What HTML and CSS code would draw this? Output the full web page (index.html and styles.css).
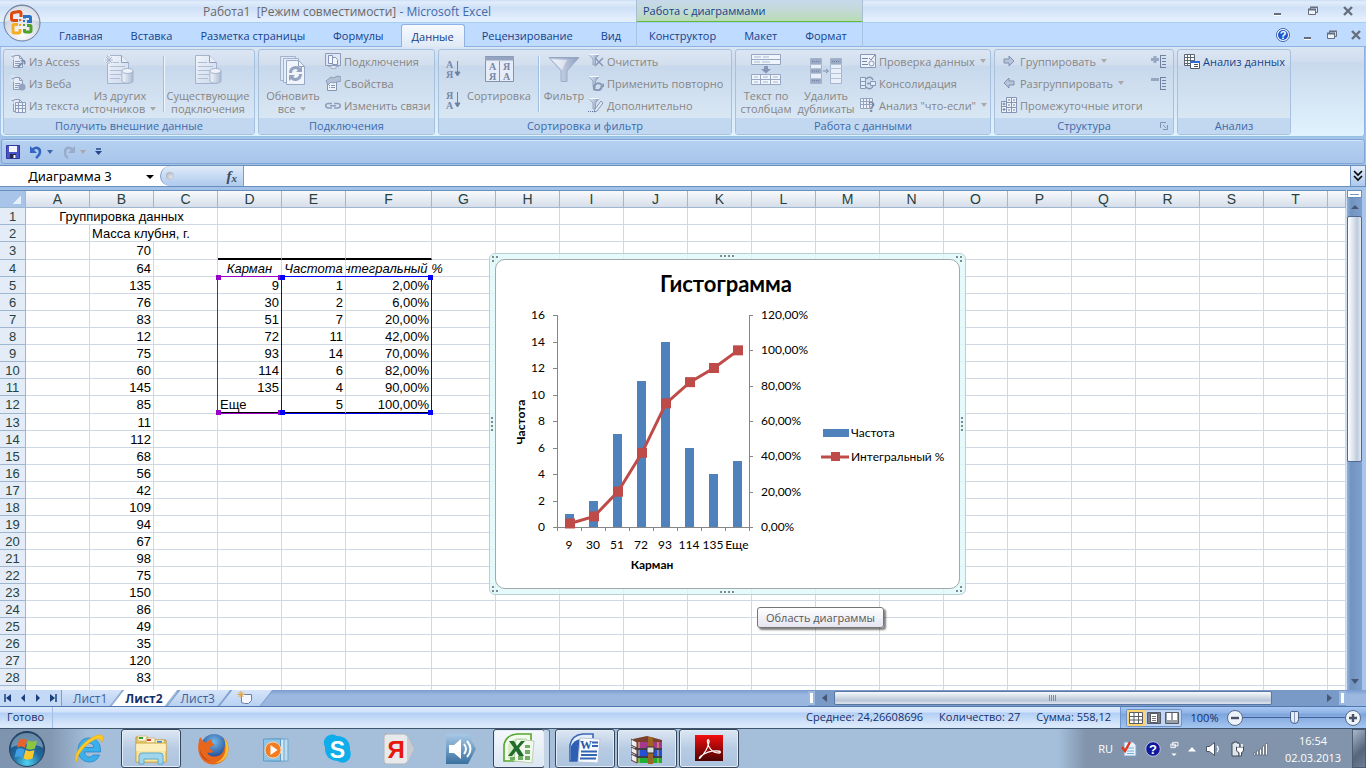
FILE: index.html
```html
<!DOCTYPE html>
<html lang="ru">
<head>
  <meta charset="UTF-8">
  <meta name="viewport" content="width=device-width, initial-scale=1">
  <title>Работа1 - Microsoft Excel</title>
  <link rel="stylesheet" href="styles.css">
</head>
<body>
  <!-- Shared icon shapes -->
  <svg class="sprite" aria-hidden="true">
    <defs>
      <linearGradient id="gPage" x1="0" y1="0" x2="1" y2="1"><stop offset="0" stop-color="#f1f5fc"/><stop offset="1" stop-color="#ccd8ea"/></linearGradient>
      <linearGradient id="gCyl" x1="0" x2="1"><stop offset="0" stop-color="#f3f7fc"/><stop offset="1" stop-color="#a9b8d2"/></linearGradient>
      <linearGradient id="gFunnel" x1="0" x2="1"><stop offset="0" stop-color="#e9f0f9"/><stop offset=".5" stop-color="#b9c6dc"/><stop offset="1" stop-color="#8fa0be"/></linearGradient>
    </defs>
    <symbol id="page" viewBox="0 0 32 32">
      <path d="M3.500 1.500h14l7 7v21h-21z" fill="url(#gPage)" stroke="#a3b3cf"/>
      <path d="M17.500 1.500v7h7" fill="#e9effa" stroke="#8d9dbb"/>
      <path d="M6 8.500h9M6 12.500h15M6 16.500h15M6 20.500h15M6 24.500h10" stroke="#afbdd6"/>
      <path d="M18 17v10c0 3 11 3 11 0V17z" fill="url(#gCyl)" stroke="#a3b1ca"/>
      <ellipse cx="23.500" cy="17" rx="5.500" ry="2.500" fill="#eef3fa" stroke="#a3b1ca"/>
    </symbol>
    <symbol id="smallpage" viewBox="0 0 16 16">
      <path d="M3.500 2.500h6l3 3v9h-9z" fill="#e6edf8" stroke="#8c9cba"/>
      <path d="M9.500 2.500v3h3M5 8.500h5M5 10.500h5M5 12.500h3" fill="none" stroke="#8c9cba"/>
      <path d="M0 3.500h6M3 0v7M1 1l4 5M5 1L1 6" stroke="#e9f0fb"/><path d="M3 2v3M1 3.500h4" stroke="#a7b5ce"/>
    </symbol>
    <symbol id="smallfunnel" viewBox="0 0 16 16">
      <path d="M1 1.500h10L7.500 6v5L5 12V6z" fill="url(#gFunnel)" stroke="#8797b5" stroke-width=".8"/>
      <path d="M1 1.500h10" stroke="#f5f8fd"/>
    </symbol>
    <symbol id="restore" viewBox="0 0 12 10">
      <path d="M3.500 3V1.500h7v5H8.500M3 1h8" fill="none" stroke="#666e7c"/>
      <path d="M1.500 3.500h7v5h-7z" fill="#eef4fc" stroke="#666e7c"/><path d="M1 3.500h8" stroke="#666e7c" stroke-width="2"/>
    </symbol>
    <symbol id="cross" viewBox="0 0 12 10"><path d="M2 1l8 8M10 1L2 9" stroke="#666e7c" stroke-width="2.400"/></symbol>
    <symbol id="minimize" viewBox="0 0 12 10"><path d="M2 8h7" stroke="#666e7c" stroke-width="2"/><path d="M2 9.500h7" stroke="#fff"/></symbol>
    <symbol id="outline" viewBox="0 0 16 16">
      <path d="M9.500 2v12M9 2.500h6M11 5.500h4M11 8.500h4M11 11.500h4M9 14.500h6" stroke="#6f80a0" fill="none"/>
    </symbol>
  </svg>

  <header class="top">
    <button class="office" aria-label="Office">
      <svg viewBox="0 0 40 40">
        <defs>
          <radialGradient id="gOrb" cx=".5" cy=".8" r=".8"><stop offset="0" stop-color="#fff"/><stop offset=".6" stop-color="#d5dae6"/><stop offset="1" stop-color="#8e99b0"/></radialGradient>
        </defs>
        <circle cx="20" cy="20" r="18" fill="url(#gOrb)" stroke="#6b7c99"/>
        <path d="M3 19a17 16 0 0 1 34 0c-9-4-25-4-34 0z" fill="#f4f6fb" opacity=".7"/>
        <g fill="none" stroke-width="3">
          <path d="M16 17.500h-4.500q-2 0-2-2v-4q0-1.500 2-2l5.500-1q2 0 2 2V14" stroke="#dc4a10"/>
          <path d="M22.500 15.500v-2h5q1 0 1 1v4h-3.500" stroke="#2b73c2"/>
          <path d="M16 21.500h-4q-1 0-1 1v6q0 1.500 1.500 1.500h4q1.500 0 1.500-1.500V26" stroke="#f5ae22"/>
          <path d="M25 22.500h3q1 0 1 1v4q0 1.500-1.500 1.500h-4q-1 0-1-1V26" stroke="#4fa12c"/>
        </g>
        <g fill="#e0641c"><path d="M17 16h2v2h-2z"/><path d="M21 17h2v2h-2z" fill="#2b73c2"/><path d="M17 21h2v2h-2z" fill="#f2a71b"/><path d="M21 21h2v2h-2z" fill="#4fa12c"/></g>
      </svg>
    </button>
    <div class="titlebar">
      <div class="title"><span class="doc">Работа1&nbsp; [Режим совместимости]</span> - Microsoft Excel</div>
      <div class="context-title">Работа с диаграммами</div>
      <div class="winbtns">
        <button aria-label="Свернуть"><svg><use href="#minimize"/></svg></button>
        <button aria-label="Восстановить"><svg><use href="#restore"/></svg></button>
        <button aria-label="Закрыть"><svg><use href="#cross"/></svg></button>
      </div>
    </div>
    <nav class="tabs">
      <div class="main-tabs">
        <button>Главная</button>
        <button>Вставка</button>
        <button>Разметка страницы</button>
        <button>Формулы</button>
        <button class="active">Данные</button>
        <button>Рецензирование</button>
        <button>Вид</button>
      </div>
      <div class="context-tabs">
        <button>Конструктор</button>
        <button>Макет</button>
        <button>Формат</button>
      </div>
      <div class="docbtns">
        <button aria-label="Справка"><svg viewBox="0 0 14 14"><circle cx="7" cy="7" r="6.500" fill="#fff" stroke="#3c62a8"/><circle cx="7" cy="7" r="5" fill="#1f55cf"/><text x="7" y="11" text-anchor="middle" class="q">?</text></svg></button>
        <button aria-label="Свернуть окно"><svg><use href="#minimize"/></svg></button>
        <button aria-label="Восстановить окно"><svg><use href="#restore"/></svg></button>
        <button aria-label="Закрыть окно"><svg><use href="#cross"/></svg></button>
      </div>
    </nav>
  </header>

  <section class="ribbon">
    <div class="group g-external">
      <div class="tools">
        <div class="list">
          <button><svg><use href="#smallpage"/><path d="M8 14l4-4M11 8a2 2 0 1 1 3 3" stroke="#7b8cab" stroke-width="2" fill="none"/></svg>Из Access</button>
          <button><svg><use href="#smallpage"/><circle cx="12" cy="12" r="3.500" fill="#94a4c0"/></svg>Из Веба</button>
          <button><svg><use href="#smallpage"/><path d="M5.500 5.500h10v10h-10zM5 8.500h11M5 11.500h11M8.500 6v10M12.500 6v10" fill="#eef3fb" stroke="#8c9cba"/></svg>Из текста</button>
        </div>
        <button class="big w-other"><svg viewBox="0 0 32 32"><use href="#page"/><path d="M0 6h10M5 1v10M2 3l6 6M8 3L2 9" stroke="#edf3fb" stroke-width="2"/><path d="M1 6h8M5 2v8M2 3l6 6M8 3L2 9" stroke="#a4b2cb"/></svg><span>Из других<br>источников <i class="arr"></i></span></button>
        <span class="sep"></span>
        <button class="big w-exist"><svg viewBox="0 0 32 32"><use href="#page"/></svg><span>Существующие<br>подключения</span></button>
      </div>
      <h2>Получить внешние данные</h2>
    </div>

    <div class="group g-conn">
      <div class="tools">
        <button class="big w-refresh"><svg viewBox="0 0 32 32">
          <path d="M3.500 2.500h15v24h-15z" fill="#dfe8f5" stroke="#a3b3cf"/><path d="M6.500 4.500h15v24h-15z" fill="#e6edf8" stroke="#a3b3cf"/>
          <path d="M9.500 6.500h12l6 6v18h-18z" fill="#f0f4fb" stroke="#98a8c5"/><path d="M21.500 6.500v6h6" fill="none" stroke="#8d9dbb"/>
          <path d="M13.500 19c0-6 7-7 9-3M23.500 20c0 6-7 7-9 3" fill="none" stroke="#94a4c0" stroke-width="3"/><path d="M19 18h6v-6zM18 21h-6v6z" fill="#94a4c0"/></svg><span>Обновить<br>все <i class="arr"></i></span></button>
        <div class="list">
          <button><svg><path d="M.5.5h15v12H.500z" fill="#dfe7f4" stroke="#8c9cba"/><path d="M3.500 2.500h4v8h-4zM7.500 4.500h3l2 2v5h-5z" fill="#f2f6fc" stroke="#8494b2"/><path d="M3 13.500h3v2h5v-2h3" stroke="#a4b1c9" fill="#e5ecf7"/></svg>Подключения</button>
          <button><svg><path d="M2.500 5.500h9v10h-9z" fill="#eef3fb" stroke="#8494b2"/><path d="M4 10.500h1M6 10.500h4M4 12.500h1M6 12.500h4" stroke="#8494b2"/><path d="M1 6l5-4 2 1 5-2 3 1v4l-4 1-4 1-2-1-3 3z" fill="#b3c0d6" stroke="#8c9bb8"/></svg>Свойства</button>
          <button><svg><path d="M7 6.500H3.500a2.500 2 0 0 0 0 4.500H7M9 6.500h3.500a2.500 2 0 0 1 0 4.500H9M5 8.800h6" fill="none" stroke="#8e9dba" stroke-width="1.600"/></svg>Изменить связи</button>
        </div>
      </div>
      <h2>Подключения</h2>
    </div>

    <div class="group g-sort">
      <div class="tools">
        <div class="sorts">
          <button aria-label="По возрастанию"><svg viewBox="0 0 16 20"><text x="1" y="9" class="az">А</text><text x="1" y="19" class="az">Я</text><path d="M12.500 2v13M10 13l2.500 4 2.500-4z" stroke="#6f80a0" fill="#6f80a0"/></svg></button>
          <button aria-label="По убыванию"><svg viewBox="0 0 16 20"><text x="1" y="9" class="az">Я</text><text x="1" y="19" class="az">А</text><path d="M12.500 2v13M10 13l2.500 4 2.500-4z" stroke="#6f80a0" fill="#6f80a0"/></svg></button>
        </div>
        <button class="big w-sort"><svg viewBox="0 0 32 32"><path d="M2.500 2.500h28v25h-28z" fill="#e6edf8" stroke="#8292b0"/><path d="M2 4.500h29" stroke="#94a3bf" stroke-width="4"/><path d="M16.500 7v20" stroke="#8292b0"/>
          <text x="6" y="16" class="az">А</text><text x="6" y="26" class="az">Я</text><text x="20" y="16" class="az">Я</text><text x="20" y="26" class="az">А</text></svg><span>Сортировка</span></button>
        <span class="sep"></span>
        <button class="big w-filter"><svg viewBox="0 0 32 32"><path d="M1 3.500h30L19 17v10.500h-6V17z" fill="url(#gFunnel)" stroke="#a0aec8"/><path d="M2 4h28" stroke="#8f9fbc"/><path d="M5 6h14l-5 10z" fill="#fff" opacity=".5"/></svg><span>Фильтр</span></button>
        <div class="list">
          <button><svg><use href="#smallfunnel"/><path d="M7 5l8 8M15 5l-8 8" stroke="#8696b4" stroke-width="1.500"/></svg>Очистить</button>
          <button><svg><use href="#smallfunnel"/><path d="M6 12c1-5 6-4 8-2M14 11c-1 5-5 5-8 3" stroke="#8696b4" stroke-width="2" fill="none"/><path d="M12 12h4V8zM8 12H5v4z" fill="#8696b4"/></svg>Применить повторно</button>
          <button><svg><use href="#smallfunnel"/><path d="M13 4l2 2-6 8-3 1 1-3z" fill="#e3ebf7" stroke="#8696b4"/><path d="M0 14.500h7" stroke="#65779a" stroke-dasharray="1 1"/></svg>Дополнительно</button>
        </div>
      </div>
      <h2>Сортировка и фильтр</h2>
    </div>

    <div class="group g-data">
      <div class="tools">
        <button class="big w-text"><svg viewBox="0 0 32 32"><path d="M1.500.5h29v10h-29zM1 5.500h30M1.500 20.500h29v10h-29zM1 25.500h30M10.500 20v10M20.500 20v10" fill="#f0f5fc" stroke="#96a6c3"/><path d="M4 3h7M13 3h6M4 8h6M12 8h8M4 23h4M13 23h5M23 23h5M4 28h4M13 28h5M23 28h5" stroke="#a9b7cf"/><path d="M14 12h4v3h3l-5 4.500L11 15h3z" fill="#8595b3"/></svg><span>Текст по<br>столбцам</span></button>
        <button class="big w-dup"><svg viewBox="0 0 32 32"><path d="M.5 4.500h11v25H.500zM20.500 4.500h11v25h-11z" fill="#eaf0f9" stroke="#a5b3cc"/><path d="M1 5h10v5H1zM1 15h10v4H1zM1 24h10v5H1zM21 5h10v5H21z" fill="#9babc5"/><path d="M2 7.500h8M2 17h8M2 26.500h8M22 7.500h8" stroke="#6f80a0" stroke-dasharray="1 1"/><path d="M0 10.500h12M0 14.500h12M0 19.500h12M0 24.500h12M20 10.500h12M20 14.500h12M20 19.500h12M20 24.500h12" stroke="#b5c1d6"/><path d="M13 17h5M16 15l2.500 2-2.500 2" stroke="#7d8dac" fill="none"/></svg><span>Удалить<br>дубликаты</span></button>
        <div class="list">
          <button><svg><path d="M.5 1.500h15v13H.500z" fill="#eef3fb" stroke="#8797b5"/><path d="M2 5.500h6M2 8.500h5M2 11.500h6M9 5l2 2 4-5" stroke="#7787a6" fill="none"/><circle cx="11.500" cy="10.500" r="2.500" fill="none" stroke="#8797b5"/></svg>Проверка данных <i class="arr"></i></button>
          <button><svg><path d="M.5 2.500h5v11h-5zM0 6.500h6M0 10.500h6M10.500 6.500h5v4h-5z" fill="#e3ebf7" stroke="#8797b5"/><path d="M6 4c3-3 6-2 7 1M6 12c3 3 6 2 7-1M7 8.500h3" stroke="#8797b5" stroke-width="1.500" fill="none"/></svg>Консолидация</button>
          <button><svg><path d="M.5 1.500h12v10H.500zM0 4.500h13M0 7.500h13M3.500 1v11M6.500 1v11M9.500 1v11" fill="#eef3fb" stroke="#94a4c0"/><text x="8" y="15" class="what">?</text></svg>Анализ "что-если" <i class="arr"></i></button>
        </div>
      </div>
      <h2>Работа с данными</h2>
    </div>

    <div class="group g-struct">
      <div class="tools">
        <div class="list">
          <button><svg><path d="M3 6h5V3l5 5-5 5v-3H3z" fill="#b7c4da" stroke="#8090ae"/></svg>Группировать <i class="arr"></i></button>
          <button><svg><path d="M13 6H8V3L3 8l5 5v-3h5z" fill="#b7c4da" stroke="#8090ae"/></svg>Разгруппировать <i class="arr"></i></button>
          <button><svg><path d="M.5 4.500h5v11h-5zM.5 9.500h5M5.500.5h10v15h-10zM5 5.500h11M5 10.500h11M10.500 0v16" fill="#eef3fb" stroke="#8494b2"/><path d="M1.500 7h3M3 5.500v3M1.500 12.500h3M3 11v3M7 3h2M12 3h2M7 8h2M12 8h2M7 13h2M12 13h2" stroke="#6f80a0"/></svg>Промежуточные итоги</button>
        </div>
        <div class="details">
          <button aria-label="Отобразить детали"><svg><use href="#outline"/><path d="M0 6.500h8M4 3v7" stroke="#97a6c1" stroke-width="3"/></svg></button>
          <button aria-label="Скрыть детали"><svg><use href="#outline"/><path d="M0 4.500h8" stroke="#97a6c1" stroke-width="3"/></svg></button>
        </div>
      </div>
      <h2>Структура</h2>
      <button class="launcher" aria-label="Параметры структуры"><svg viewBox="0 0 8 8"><path d="M.5 6V.5H6M3 3l3 3M7.500 3v4.500H3" stroke="#7e93b5" fill="none"/></svg></button>
    </div>

    <div class="group g-analysis">
      <div class="tools">
        <div class="list">
          <button class="enabled"><svg><path d="M.5 1.500h10v11H.500zM0 4.500h11M0 7.500h11M0 10.500h11M3.500 1v12M6.500 1v12" fill="#fff" stroke="#5d6673"/><path d="M6.500 8.500h9v7h-9z" fill="#fff" stroke="#4d5a6b"/><path d="M6 9h10" stroke="#2e6bd6" stroke-width="2"/><path d="M10 11.500h4M10 13.500h4" stroke="#555"/></svg>Анализ данных</button>
        </div>
      </div>
      <h2>Анализ</h2>
    </div>
  </section>

  <div class="qat">
    <button aria-label="Сохранить"><svg viewBox="0 0 14 14"><path d="M.5.5h13v13H.500z" fill="#4a52c8" stroke="#33399c"/><path d="M3 1h8v6H3z" fill="#f4f6ff"/><path d="M4 9h6v4H4z" fill="#222a55"/><path d="M7.500 10h2v3h-2z" fill="#fff"/></svg></button>
    <button aria-label="Отменить"><svg viewBox="0 0 14 14"><path d="M3 5c4-4 8-2 8 2 0 3-2 4-4 6" fill="none" stroke="#3465c0" stroke-width="2.600"/><path d="M1 1v7h7z" fill="#3465c0"/></svg><i class="arr blue"></i></button>
    <button aria-label="Вернуть"><svg viewBox="0 0 14 14"><path d="M11 5C7 1 3 3 3 7c0 3 1 5 3 6" fill="none" stroke="#98acc9" stroke-width="2.400"/><path d="M13 1v7H6z" fill="#98acc9"/></svg><i class="arr"></i></button>
    <button class="more" aria-label="Настройка панели"><svg viewBox="0 0 7 7"><path d="M1 1h5" stroke="#27478a" stroke-width="1.500"/><path d="M0 3h7L3.500 7z" fill="#27478a"/></svg></button>
  </div>

  <div class="formula-bar">
    <input class="namebox" aria-label="Имя" value="Диаграмма 3">
    <button class="namedrop" aria-label="Список имён"><i class="arr black"></i></button>
    <div class="fx"><span class="dot"></span><button aria-label="Вставить функцию"><em>f</em><sub>x</sub></button></div>
    <input class="formula" aria-label="Строка формул">
    <button class="expand" aria-label="Развернуть строку формул"><svg viewBox="0 0 10 12"><path d="M1 1l4 4 4-4M1 6l4 4 4-4" fill="none" stroke="#000" stroke-width="1.600"/></svg></button>
  </div>

  <main class="workspace">
    <div class="sheet">
      <table class="grid">
        <colgroup id="cols"></colgroup>
        <thead><tr id="head"></tr></thead>
        <tbody id="rows"></tbody>
      </table>
      <div class="range range-x"><b></b><b></b><b></b><b></b></div>
      <div class="range range-y"><b></b><b></b><b></b><b></b></div>

      <div class="chart">
        <div class="chart-area">
          <svg id="chart" viewBox="0 0 464 330" role="img" aria-label="Гистограмма"></svg>
        </div>
        <svg class="grips" viewBox="0 0 477 342" aria-hidden="true">
          <g stroke="#7e8a8c" stroke-width="2" stroke-dasharray="2 2">
            <path d="M231 3h15M231 339h15M3 164v15M473 164v15"/>
            <path d="M3 4h7M3 8h3M467 4h7M471 8h3M3 334h3M3 338h7M471 334h3M467 338h7"/>
          </g>
        </svg>
      </div>
      <div class="tip" role="tooltip">Область диаграммы</div>
    </div>
    <div class="vscroll">
      <div class="split"></div>
      <i class="up"></i>
      <div class="vthumb"></div>
      <i class="down"></i>
    </div>
  </main>

  <div class="sheetbar">
    <div class="sheetnav">
      <button aria-label="Первый лист"><svg viewBox="0 0 8 8"><path d="M1 0v8" stroke="#1b3f7c" stroke-width="1.500"/><path d="M7 0v8L2 4z" fill="#1b3f7c"/></svg></button>
      <button aria-label="Предыдущий лист"><svg viewBox="0 0 8 8"><path d="M6 0v8L2 4z" fill="#1b3f7c"/></svg></button>
      <button aria-label="Следующий лист"><svg viewBox="0 0 8 8"><path d="M2 0v8l4-4z" fill="#1b3f7c"/></svg></button>
      <button aria-label="Последний лист"><svg viewBox="0 0 8 8"><path d="M1 0v8l5-4z" fill="#1b3f7c"/><path d="M7 0v8" stroke="#1b3f7c" stroke-width="1.500"/></svg></button>
    </div>
    <button class="stab first">Лист1</button>
    <button class="stab current">Лист2</button>
    <button class="stab">Лист3</button>
    <button class="stab new" aria-label="Вставить лист"><svg viewBox="0 0 16 14"><path d="M4.500 3.500h10v6l-3 3h-4l-3-1z" fill="#f4f7fd" stroke="#6c7fa5"/><path d="M4 0v7M.5 3.500h7M1.500 1l5 5M6.500 1l-5 5" stroke="#e8a33a"/></svg></button>
    <div class="hscroll">
      <span class="hsplit"></span>
      <i class="left"></i>
      <div class="hthumb"></div>
      <i class="right"></i>
      <span class="hsplit"></span>
    </div>
  </div>

  <footer class="status">
    <span class="ready">Готово</span>
    <span class="stat">Среднее: 24,26608696</span>
    <span class="stat">Количество: 27</span>
    <span class="stat">Сумма: 558,12</span>
    <div class="zoomer">
      <div class="views">
        <button class="on" aria-label="Обычный"><svg viewBox="0 0 14 12"><path d="M.5.500h13v11H.500zM0 4.500h14M0 8h14M5 0v12M9.500 0v12" fill="#fff" stroke="#5b5b62"/></svg></button>
        <button aria-label="Разметка страницы"><svg viewBox="0 0 14 12"><path d="M.5.500h13v11H.500z" fill="#777c86" stroke="#555b66"/><path d="M3.500 1.500h7v9h-7z" fill="#fff" stroke="#555b66"/><path d="M5 4.500h4M5 6.500h4M5 8.500h4" stroke="#777"/></svg></button>
        <button aria-label="Страничный режим"><svg viewBox="0 0 14 12"><path d="M.5.500h13v11H.500z" fill="#9aa0aa" stroke="#555b66"/><path d="M2 1h4v7H2zM8 1h4v7H8z" fill="#fff"/></svg></button>
      </div>
      <button class="pct">100%</button>
      <button class="round" aria-label="Уменьшить"><svg viewBox="0 0 16 16"><circle cx="8" cy="8" r="7.500" fill="#eef3fa" stroke="#566a8c"/><path d="M4 8h8" stroke="#48536a" stroke-width="2.400"/></svg></button>
      <input type="range" min="10" max="190" value="100" aria-label="Масштаб">
      <button class="round" aria-label="Увеличить"><svg viewBox="0 0 16 16"><circle cx="8" cy="8" r="7.500" fill="#eef3fa" stroke="#566a8c"/><path d="M4 8h8M8 4v8" stroke="#48536a" stroke-width="2.400"/></svg></button>
    </div>
  </footer>

  <div class="taskbar">
    <button class="start" aria-label="Пуск">
      <svg viewBox="0 0 38 38">
        <defs><radialGradient id="gStart" cx=".5" cy=".9" r=".9"><stop offset="0" stop-color="#4fd3f2"/><stop offset=".45" stop-color="#226a9f"/><stop offset="1" stop-color="#16426e"/></radialGradient></defs>
        <circle cx="19" cy="19" r="17.500" fill="url(#gStart)" stroke="#2a3f58"/>
        <path d="M3 18A16 15 0 0 1 35 18c-8-5-24-5-32 0z" fill="#fff" opacity=".35"/>
        <path d="M11 10c3-2 5-1.500 8 0l-2 8c-3-2-5-2-8 0z" fill="#e8622c"/>
        <path d="M20 10.500c3 1.500 5 1.500 9 0l-2 8c-4 1.500-6 1.500-9 0z" fill="#8cc63c"/>
        <path d="M8.500 19.500c3-2 5-1.500 8 0l-2 8c-3-1.500-5-1.500-8 0z" fill="#3fa0e4"/>
        <path d="M17.500 20c3 1.500 5 1.500 9 0l-2 8.500c-4 1.500-6 1.500-9 0z" fill="#fcc72c"/>
      </svg>
    </button>
    <button class="task" aria-label="Internet Explorer"><svg viewBox="0 0 32 32">
      <path d="M16 5C9 5 5 10.500 5 17s4.500 12 11.500 12c5 0 8.500-3 10-7h-6.500c-1 1.500-2 2-3.500 2-3 0-5-2-5-5h16C28 10 23.500 5 16 5zm-4.500 9.500c.5-3 2-4.500 4.700-4.500s4.300 1.500 4.500 4.500z" fill="#3cb0ea" stroke="#1d7cc4" stroke-width=".7"/>
      <path d="M4 29c-5-3 1-15 11-22C22 2 29 0 30 4c.5 2-.5 4.500-1.500 6 0-3-1-5-5-4C16 8 6 19 4.500 25c-.3 1.500-.2 3-.5 4z" fill="#fbc928" stroke="#e2a50e" stroke-width=".5"/></svg></button>
    <button class="task open" aria-label="Проводник"><svg viewBox="0 0 32 32">
      <path d="M1 4h11l2 3h17v22H1z" fill="#e9c96a" stroke="#c0993c"/><path d="M3 3h9v5H3zM11 5h9v5h-9zM20 7h9v5h-9z" fill="#fdf6dc" stroke="#c9a954" stroke-width=".6"/>
      <path d="M4 4h4v2H4z" fill="#2aa33b"/><path d="M12 6h4v2h-4z" fill="#d5432c"/><path d="M22 8h5v2h-5z" fill="#2f8fdc"/>
      <path d="M1 10h30v19H1z" fill="#f7e5a0" stroke="#d1b052"/><path d="M1 11h30v7H1z" fill="#fdf3c8" opacity=".7"/>
      <path d="M4 31V23q0-3 3-3h18q3 0 3 3v8h-5v-5H9v5z" fill="#9fd6ee" stroke="#5fa9cc"/></svg></button>
    <button class="task" aria-label="Firefox"><svg viewBox="0 0 32 32">
      <defs><radialGradient id="gGlobe" cx=".5" cy=".3" r=".7"><stop offset="0" stop-color="#73b8ea"/><stop offset="1" stop-color="#173a86"/></radialGradient></defs>
      <circle cx="17" cy="14" r="13" fill="url(#gGlobe)"/>
      <path d="M2 8C-1 19 4 31 16 31.500c9 0 15.500-7 15.500-16 0-4-1.500-8-4-10 1 4 1 6 0 9-1 6-5 9-10 9-4 0-7-2-7-4 2 0 4 1 6-1-3-1-4-3-3-5 1 0 3 0 4-2-2-1-3-2-3-5-2 0-4 2-5 3-2 0-5-2-5.500-5C2 5 2 6.500 2 8z" fill="#e8661b"/>
      <path d="M27 5c5 5 6 13 2 19-3 4-7 6-11 6 6-2 10-7 10.500-13C29 12 28 9 27 5z" fill="#fcbf2e"/><path d="M3 16c1 6 5 11 11 12-6 0-11-5-11-12z" fill="#a8351a"/></svg></button>
    <button class="task" aria-label="Windows Media"><svg viewBox="0 0 32 32">
      <path d="M13 6h16v22H13z" fill="#bcdcf0" stroke="#6fa6cd"/><path d="M9 6h16v22H9z" fill="#cfe6f5" stroke="#6fa6cd"/><path d="M4.500 6h17v22h-17z" fill="#8ec4e6" stroke="#5f9bc6"/>
      <circle cx="14" cy="17" r="8" fill="#f47c20" stroke="#fbd3a8"/><path d="M11.500 12v10l7-5z" fill="#fff"/></svg></button>
    <button class="task" aria-label="Skype"><svg viewBox="0 0 32 32">
      <path d="M9 2c3-1 5 0 7 1 8 0 13 5 13 12v2c2 5 0 10-4 12-3 1-6 1-8-1C9 28 4 23 4 16v-2C1 9 4 3 9 2z" fill="#10adea"/>
      <text x="16.500" y="25" text-anchor="middle" class="skype">S</text></svg></button>
    <button class="task" aria-label="Яндекс"><svg viewBox="0 0 32 32">
      <path d="M2 1h19q2 0 3 2l7 13-7 13q-1 2-3 2H4q-3 0-3-3V4q0-3 3-3z" fill="#e8e9eb" stroke="#b1b4b9"/><path d="M24 2l7 14-7 14z" fill="#c8cbd0"/>
      <text x="13" y="25" text-anchor="middle" class="ya">Я</text></svg></button>
    <button class="task" aria-label="Звук"><svg viewBox="0 0 32 32">
      <defs><linearGradient id="gSnd" x1="0" y1="0" x2="0" y2="1"><stop offset="0" stop-color="#a7c9e8"/><stop offset="1" stop-color="#39709f"/></linearGradient></defs>
      <path d="M1 1h22l8 15-8 15H1z" fill="url(#gSnd)"/><path d="M4 12h5l7-6v20l-7-6H4z" fill="#fff"/><path d="M19 11q4 5 0 10M22 8q7 8 0 16" fill="none" stroke="#fff" stroke-width="2"/></svg></button>
    <button class="task open stacked" aria-label="Excel"><svg viewBox="0 0 32 32">
      <path d="M1 28V12Q3 2 14 1h14v27z" fill="#f3faef" stroke="#56a52c" stroke-width="1.600"/><path d="M5 26V13Q7 6 15 5h9v21z" fill="#d5ebc6"/>
      <path d="M13 6l18 2-2 22-18-2z" fill="#f2f8ee" stroke="#bccfb0"/><path d="M6 8h5l3 5 4-5h4l-6 7 5 8h-5l-3-5-4 5H5l6-8z" fill="#1f6b2b"/>
      <path d="M22 12h5v3h-5zM22 17h5v4h-5zM15 23h5v4h-5zM22 23h5v4h-5zM7 24h5v3H7z" fill="#6fae62"/></svg></button>
    <button class="task open" aria-label="Word"><svg viewBox="0 0 32 32">
      <path d="M1 28V12Q3 2 14 1h10v27z" fill="#e5eefb" stroke="#3b67b5" stroke-width="1.600"/><path d="M2 28V13Q5 7 12 6l-2 22z" fill="#2e5fb3"/>
      <path d="M11 5l20 1-2 24-20-1z" fill="#f7f9fd" stroke="#b9c5db"/><path d="M23 9.500h6M23 13h6M12 18.500h16M12 22h16M11 25.500h16" stroke="#3464b4" stroke-width="1.800"/>
      <text x="11" y="16" class="word">W</text></svg></button>
    <button class="task open" aria-label="WinRAR"><svg viewBox="0 0 32 32">
      <path d="M2 6l14-3 15 4v6H6z" fill="#7b3f2d"/><path d="M4 9h27v6H4z" fill="#a5378f"/><path d="M4 17h27v6H4z" fill="#2450d8"/><path d="M4 25h27v5H4z" fill="#1fae36"/>
      <path d="M4 16h27M4 24h27" stroke="#1a1016" stroke-width="1.500"/><path d="M0 6l6 3v6l-6-3zM0 14l6 3v5l-6-3zM0 21l6 3v6l-6-3z" fill="#eee" stroke="#5b3b34"/><path d="M8 9v6M27 9v6M8 17v6M27 17v6M8 25v5M27 25v5" stroke="#e1c04b"/>
      <path d="M17 4h5v27h-5z" fill="#9c6425"/><path d="M16 14h7v6h-7z" fill="#dcdcdc" stroke="#333"/></svg></button>
    <button class="task open" aria-label="Acrobat"><svg viewBox="0 0 32 32">
      <defs><linearGradient id="gPdf" x1="0" y1="0" x2="0" y2="1"><stop offset="0" stop-color="#f30d0d"/><stop offset="1" stop-color="#4a0303"/></linearGradient></defs>
      <path d="M2 2h28v26H2z" fill="url(#gPdf)"/><path d="M7 25c4-4 8-10 9-16 .3-3-2-3-1.500 0C15 14 19 20 26 20c2 0 2-2-1-2-6-.5-13 2-17 5-2 2-2 3-1 2z" fill="none" stroke="#fff" stroke-width="1.300"/></svg></button>

    <div class="tray">
      <span class="lang">RU</span>
      <button aria-label="Проверка"><svg viewBox="0 0 16 16"><path d="M3 1h9l3 3v11H3z" fill="#eaf3fc" stroke="#7fa5cc"/><path d="M6 7h7M6 10h7M6 12.500h7" stroke="#6fb0e0"/><path d="M1 6l3 4 5-9" fill="none" stroke="#e2361b" stroke-width="2.400"/></svg></button>
      <button aria-label="Помощь"><svg viewBox="0 0 16 16"><circle cx="8" cy="8" r="7.300" fill="#11189c" stroke="#b9c4da"/><text x="8" y="12.500" text-anchor="middle" class="q q-l">?</text></svg></button>
      <button class="mini" aria-label="Окна"><svg viewBox="0 0 10 18"><path d="M3.500 1.500h6v4h-6zM1.500 3.500h5v4h-5z" fill="#8a99ae" stroke="#fff"/><path d="M2 14h6l-3 3z" fill="#fff"/></svg></button>
      <button class="mini" aria-label="Скрытые значки"><svg viewBox="0 0 10 6"><path d="M1 5.500h8L5 1z" fill="#fff"/></svg></button>
      <button aria-label="Громкость"><svg viewBox="0 0 16 16"><path d="M1.500 5.500h3l5-4v13l-5-4h-3z" fill="#fff" stroke="#4a5563"/><path d="M12 5q2.500 3 0 6" fill="none" stroke="#fff" stroke-width="1.300"/></svg></button>
      <button aria-label="Питание"><svg viewBox="0 0 16 16"><path d="M3 2h2V1h3v1h2v13H3z" fill="#dfe5ec" stroke="#3f4a58"/><path d="M7.500 6h7v3q0 2-2 2.500V15H10v-3.500q-2.500-.5-2.500-2.500z" fill="#fff" stroke="#3f4a58"/><path d="M9 3v3M13 3v3" stroke="#fff" stroke-width="1.500"/></svg></button>
      <button aria-label="Сеть"><svg viewBox="0 0 16 16"><path d="M.5 12h2v2h-2zM3.500 10h2v4h-2zM6.500 8h2v6h-2zM9.500 5h2v9h-2zM12.500 2.500h2V14h-2z" fill="#fff" stroke="#4a5563" stroke-width=".6"/></svg></button>
      <div class="clock"><time>16:54</time><time>02.03.2013</time></div>
      <button class="desktop" aria-label="Показать рабочий стол"></button>
    </div>
  </div>

  <script src="script.js"></script>
</body>
</html>
```
FILE: styles.css
```css
/* Base */
* {
  box-sizing: border-box;
}
body {
  margin: 0;
  height: 100vh;
  display: flex;
  flex-direction: column;
  overflow: hidden;
  background: #a3c2ea;
  font-family: "Open Sans", "Noto Sans", sans-serif;
  font-size: 11px;
  color: #15428b;
}
button {
  font: inherit;
  color: inherit;
  background: none;
  border: 0;
  padding: 0;
  margin: 0;
  cursor: default;
}
svg {
  display: block;
  flex: none;
}
svg text {
  font-family: "Liberation Serif", serif;
}
.sprite {
  position: absolute;
  width: 0;
  height: 0;
}
.arr {
  display: inline-block;
  border: 3px solid transparent;
  border-top: 4px solid #a9a9a9;
  border-bottom: 0;
  margin: 0 2px;
  vertical-align: 2px;
}
.arr.blue {
  border-top-color: #3b66ab;
}
.arr.black {
  border-width: 4px;
  border-bottom: 0;
  border-top-color: #000;
}

/* Title bar */
.top {
  position: relative;
  flex: none;
}
.office {
  position: absolute;
  left: 2px;
  top: 3px;
  z-index: 2;
}
.office svg {
  width: 40px;
  height: 40px;
}
.titlebar {
  display: flex;
  height: 23px;
  background: linear-gradient(#c9dcf6 0, #e2edfb 2px, #cfe0f7 8px, #e4effd 20px);
  border-bottom: 1px solid #a8cdf4;
}
.title {
  flex: 0 0 636px;
  padding-left: 203px;
  font-size: 12px;
  line-height: 23px;
  color: #3e6aaa;
  white-space: nowrap;
}
.doc {
  color: #696969;
}
.context-title {
  flex: 0 0 227px;
  padding-left: 6px;
  line-height: 22px;
  background: linear-gradient(#c6d9ec, #c3d9d6 50%, #b8dcb4);
  border-left: 1px solid #a9bdd3;
  border-right: 1px solid #a9bdd3;
  border-bottom: 1px solid #62bb3a;
}
.winbtns, .docbtns {
  display: flex;
  margin-left: auto;
  align-items: center;
}
.winbtns {
  gap: 23px;
  padding-right: 12px;
}
.winbtns svg, .docbtns svg {
  width: 12px;
  height: 10px;
}

/* Ribbon tabs */
.tabs {
  display: flex;
  height: 24px;
  background: #bfdbff;
  border-bottom: 1px solid #8db2e3;
}
.main-tabs, .context-tabs {
  display: flex;
  height: 24px;
}
.main-tabs {
  flex: 0 0 636px;
  padding-left: 45px;
}
.tabs button {
  padding: 0 14px;
  line-height: 26px;
  white-space: nowrap;
}
.tabs .active {
  padding: 0 10px;
  margin: 1px 3px 0;
  background: linear-gradient(#f6faff, #dfe9f5);
  border: 1px solid #8db2e3;
  border-bottom: 0;
  border-radius: 3px 3px 0 0;
  line-height: 24px;
}
.context-tabs {
  flex: 0 0 227px;
  border: 1px solid #a9c2e2;
  border-width: 0 1px;
}
.context-tabs button:first-child {
  padding-left: 12px;
}
.docbtns {
  gap: 12px;
  padding-right: 4px;
}
.tabs .docbtns button {
  padding: 0;
}
.docbtns button:first-child svg {
  width: 14px;
  height: 14px;
}
.q {
  font: bold 11px "Liberation Sans", sans-serif;
  fill: #fff;
}
.q-l {
  font-size: 13px;
}

/* Ribbon */
.ribbon {
  flex: none;
  display: flex;
  gap: 3px;
  height: 90px;
  padding: 2px 0 2px 2px;
  margin: 0 1px;
  background: linear-gradient(#dbe6f4, #cfdcee 15px, #c9d9ed 16px, #e0f2fd 86px);
  border-bottom: 1px solid #98c2e4;
  border-right: 1px solid #8db2e3;
  border-radius: 0 0 4px 4px;
}
.group {
  position: relative;
  flex: none;
  height: 86px;
  display: flex;
  flex-direction: column;
  border: 1px solid #a6c1dd;
  border-radius: 3px;
  background: linear-gradient(#dce6f3, #d2deee 15px, #c8d8ec 16px, #d9e7f4 68px);
  color: #868686;
}
.group h2 {
  margin: 0;
  font-size: 11px;
  font-weight: normal;
  line-height: 16px;
  text-align: center;
  color: #3e6aaa;
  background: #c1d8f0;
}
.g-external { width: 252px; }
.g-conn { width: 177px; }
.g-sort { width: 294px; }
.g-data { width: 256px; }
.g-struct { width: 180px; }
.g-analysis { width: 114px; }
.tools {
  flex: 1;
  display: flex;
  padding: 0 0 0 6px;
}
.list {
  display: flex;
  flex-direction: column;
}
.list button {
  display: flex;
  align-items: center;
  height: 22px;
  white-space: nowrap;
}
.list svg {
  width: 16px;
  height: 16px;
  margin-right: 3px;
}
.list .arr {
  margin-left: 5px;
}
.list .enabled {
  color: #15428b;
}
.big {
  display: flex;
  flex-direction: column;
  align-items: center;
  padding-top: 4px;
  line-height: 13px;
  text-align: center;
  white-space: nowrap;
}
.big svg {
  width: 32px;
  height: 32px;
  margin-bottom: 3px;
}
.w-other { width: 84px; }
.w-exist { width: 84px; }
.w-refresh { width: 62px; }
.w-sort { width: 76px; }
.w-filter { width: 46px; }
.w-text { width: 54px; }
.w-dup { width: 66px; }
.g-external .list {
  width: 68px;
}
.g-conn .list, .g-sort .list, .g-data .list {
  margin-left: 1px;
}
.g-conn .tools, .g-data .tools {
  padding-left: 3px;
}
.sep {
  width: 2px;
  height: 56px;
  margin: 6px 1px 0;
  background: #9fbfe2;
  border-right: 1px solid #eef5fd;
}
.sorts, .details {
  display: flex;
  flex-direction: column;
}
.sorts {
  padding-top: 9px;
  gap: 11px;
}
.sorts svg {
  width: 16px;
  height: 20px;
}
.az {
  font-size: 10px;
  font-weight: bold;
  fill: #7787a6;
}
.what {
  font-size: 14px;
  font-weight: bold;
  fill: #7787a6;
}
.details {
  margin-left: auto;
  padding: 3px 6px 0 0;
  gap: 6px;
}
.details svg {
  width: 16px;
  height: 16px;
}
.launcher {
  position: absolute;
  right: 5px;
  bottom: 4px;
}
.launcher svg {
  width: 8px;
  height: 8px;
}

/* Quick access toolbar */
.qat {
  flex: none;
  display: flex;
  align-items: center;
  gap: 9px;
  height: 25px;
  margin: 2px 1px 1px;
  padding-left: 4px;
  background: linear-gradient(#b5d0f0, #a9c5ea);
  border: 1px solid #7ea6d4;
  border-radius: 3px;
  box-shadow: inset 0 1px #d5e5f8;
}
.qat button {
  display: flex;
  align-items: center;
}
.qat svg {
  width: 14px;
  height: 14px;
}
.qat .arr {
  margin: 0 0 0 4px;
}
.qat .more svg {
  width: 7px;
  height: 7px;
}

/* Formula bar */
.formula-bar {
  flex: none;
  display: flex;
  height: 22px;
  background: #fff;
  border: 1px solid #6b8fbb;
  border-width: 1px 0;
}
.formula-bar input {
  border: 0;
  padding: 0;
  outline: 0;
  background: #fff;
  color: #000;
  font: 13px "Noto Sans", sans-serif;
}
.namebox {
  width: 140px;
  text-align: center;
}
.namedrop {
  width: 20px;
}
.fx {
  display: flex;
  align-items: center;
  justify-content: space-between;
  width: 84px;
  padding: 0 6px 0 5px;
  border: 1px solid #7d9cc4;
  border-width: 0 1px;
  border-radius: 11px 0 0 11px;
  background: linear-gradient(#e0ebf9, #aecaef);
}
.dot {
  width: 8px;
  height: 8px;
  border-radius: 50%;
  background: radial-gradient(circle at 60% 60%, #e3e3e8, #9fa6b8);
}
.fx button {
  font: bold 15px "Liberation Serif", serif;
  color: #3f4a5c;
}
.fx sub {
  font-size: 11px;
  font-style: italic;
  vertical-align: -1px;
}
.formula {
  flex: 1;
  min-width: 0;
}
.expand {
  width: 16px;
  border: 1px solid #6b8fbb;
  border-width: 0 1px;
  background: linear-gradient(#e3edfa, #adc9ee);
}
.expand svg {
  width: 10px;
  height: 12px;
  margin: auto;
}

/* Worksheet */
.workspace {
  flex: 1;
  min-height: 0;
  display: flex;
  margin-top: 3px;
  background: #a9c5ec;
}
.sheet {
  position: relative;
  flex: 1;
  min-width: 0;
  overflow: hidden;
  background: #fff;
  border-top: 1px solid #6b8fbb;
}
.grid {
  width: 100%;
  table-layout: fixed;
  border-collapse: separate;
  border-spacing: 0;
  font: 13px/15px "Liberation Sans", Arial, sans-serif;
  color: #000;
}
.col-head { width: 26px; }
.col { width: 64px; }
.col-wide { width: 86px; }
.grid th, .grid td {
  height: 17px;
  padding: 0 2px;
  border-right: 1px solid #d0d7e5;
  border-bottom: 1px solid #d0d7e5;
  white-space: nowrap;
}
.grid tr.tall td, .grid tr.tall th {
  height: 18px;
}
.grid thead th {
  font-size: 14px;
  font-weight: normal;
  color: #27413e;
  background: linear-gradient(#f8fafc, #d6deea);
  border-color: #9eb6ce;
}
.grid tbody th {
  padding: 0;
  font-weight: normal;
  color: #27413e;
  background: #e4ecf7;
  border-color: #9eb6ce;
}
.grid thead .corner {
  background: linear-gradient(135deg, transparent 50%, #e6effa 51%) right 4px bottom 3px / 9px 9px no-repeat #a9c4e9;
}
.grid td {
  text-align: right;
}
.grid td.l {
  text-align: left;
}
.grid td.c {
  text-align: center;
}
.grid td.i {
  font-style: italic;
}
.grid td.line {
  border-bottom: 2px solid #000;
}
.grid td.spill {
  padding: 0;
  border-right-color: transparent;
}
.spill div {
  display: flex;
  justify-content: center;
  clip-path: inset(0 -20px 0 0);
}

/* Source ranges of the chart */
.range {
  position: absolute;
  top: 85px;
  height: 138px;
  border: 1px solid;
}
.range-x {
  left: 217px;
  width: 65px;
  color: #9a00c8;
}
.range-y {
  left: 281px;
  width: 151px;
  color: #0000ff;
}
.range b {
  position: absolute;
  width: 5px;
  height: 5px;
  background: currentColor;
}
.range b:nth-child(1) { left: -2px; top: -2px; }
.range b:nth-child(2) { right: -2px; top: -2px; }
.range b:nth-child(3) { left: -2px; bottom: -2px; }
.range b:nth-child(4) { right: -2px; bottom: -2px; }

/* Chart */
.chart {
  position: absolute;
  left: 489px;
  top: 62px;
  width: 477px;
  height: 342px;
  padding: 5px;
  border: 1px solid #b9cfd0;
  border-radius: 6px;
  background: rgba(222, 250, 250, 0.8);
}
.chart-area {
  height: 330px;
  border: 1px solid #a0aaaa;
  border-radius: 10px;
  background: #fff;
}
.chart-area svg {
  width: 464px;
  height: 330px;
  margin: -2px -1px;
}
.chart .grips {
  position: absolute;
  left: -1px;
  top: -1px;
  width: 477px;
  height: 342px;
}
#chart text {
  font: 12px Lato, "Noto Sans", sans-serif;
  fill: #000;
}
#chart .chart-title {
  font-size: 22px;
  font-weight: bold;
}
#chart .axis-title {
  font-weight: bold;
}
#chart .end { text-anchor: end; }
#chart .mid { text-anchor: middle; }
.axis {
  stroke: #868686;
  fill: none;
  shape-rendering: crispEdges;
}
.bar {
  fill: #4f81bd;
  shape-rendering: crispEdges;
}
.series {
  fill: none;
  stroke: #be4b48;
  stroke-width: 3;
}
.marker {
  fill: #be4b48;
}
.tip {
  position: absolute;
  left: 757px;
  top: 416px;
  padding: 0 8px;
  line-height: 19px;
  color: #575757;
  background: linear-gradient(#fff, #e4e5f0);
  border: 1px solid #767676;
  border-radius: 3px;
  box-shadow: 2px 2px 2px rgba(0, 0, 0, 0.5);
}

/* Vertical scroll bar */
.vscroll {
  flex: none;
  display: flex;
  flex-direction: column;
  align-items: center;
  width: 16px;
  margin-right: 4px;
  background: linear-gradient(90deg, #8fb0db, #7193c0 4px, #7fa0cb);
  border-left: 1px solid #cfe0f5;
}
.split {
  width: 15px;
  height: 8px;
  background: linear-gradient(#7a9cc8, #7a9cc8) center / 9px 1px no-repeat #fff;
  border: 1px solid #6b8fbb;
}
.up, .down, .left, .right {
  border: 4px solid transparent;
}
.up {
  border-top: 0;
  border-bottom-color: #475674;
  margin: 7px 0;
}
.down {
  border-bottom: 0;
  border-top: 5px solid #475674;
  margin: auto 0 6px;
}
.vthumb {
  width: 15px;
  height: 246px;
  border: 1px solid #4f6990;
  border-radius: 2px;
  background: linear-gradient(90deg, #fff, #d3dce8 50%, #bccadd 70%, #e4eaf2);
}

/* Sheet tabs */
.sheetbar {
  flex: none;
  display: flex;
  height: 17px;
  background: linear-gradient(#7a9dd0, #9db8e0 5px, #9bb6de);
  border-bottom: 1px solid #4f78b0;
}
.sheetnav {
  position: relative;
  z-index: 2;
  display: flex;
  align-items: center;
  justify-content: space-around;
  width: 62px;
  background: #c4d9f5;
  border-right: 1px solid #7f9fce;
}
.sheetnav svg {
  width: 8px;
  height: 8px;
}
.stab {
  position: relative;
  z-index: 0;
  padding: 0 9px;
  font-size: 12px;
  line-height: 17px;
  color: #3e5f99;
}
.stab::before {
  content: "";
  position: absolute;
  z-index: -1;
  inset: 0 -1px 0 1px;
  transform: skewX(-38deg);
  background: linear-gradient(#d5e4f9, #b9d1f2);
  border: 1px solid #7f9fce;
  border-width: 0 1px;
}
.stab.first {
  padding-left: 11px;
}
.stab.first::before {
  left: -10px;
}
.stab.current {
  z-index: 1;
  font-weight: bold;
  color: #15306b;
}
.stab.current::before {
  background: #fff;
}
.stab.new {
  width: 42px;
}
.stab.new svg {
  width: 16px;
  height: 14px;
  margin: auto;
}
.hscroll {
  display: flex;
  align-items: center;
  margin-left: auto;
  flex: 0 1 538px;
  margin-right: 20px;
  background: #7999c6;
}
.hsplit {
  width: 7px;
  height: 14px;
  background: #fff;
  border: 2px solid #9cb9e0;
}
.left {
  border-left: 0;
  border-right: 5px solid #475674;
  margin: 0 7px;
}
.right {
  border-right: 0;
  border-left: 5px solid #475674;
  margin: 0 7px 0 auto;
}
.hthumb {
  flex: 0 1 438px;
  height: 14px;
  border: 1px solid #5877a4;
  border-radius: 2px;
  background:
    repeating-linear-gradient(90deg, #7e8da6 0 1px, transparent 1px 2px) center / 8px 6px no-repeat,
    linear-gradient(#f7f9fc, #ccd5e2 50%, #bac6d8 70%, #dde4ee);
}

/* Status bar */
.status {
  flex: none;
  display: flex;
  height: 21px;
  line-height: 20px;
  color: #15306b;
  background: linear-gradient(#dfebfb, #d0e2fb 5px, #b3cff5 6px, #d9e8fb 18px);
  white-space: nowrap;
}
.ready {
  width: 53px;
  padding-left: 7px;
  margin-right: auto;
  border-right: 1px solid #a3bfe6;
}
.stat {
  margin-right: 16px;
}
.stat:nth-of-type(4) {
  margin-right: 9px;
}
.zoomer {
  display: flex;
  align-items: center;
  width: 246px;
  padding: 0 5px;
  border-left: 1px solid #6c94ce;
  background: linear-gradient(#a9c8f2, #8fb3e6 6px, #7da4dc 7px, #a5c6f1);
}
.views {
  display: flex;
  height: 18px;
  border: 1px solid #6f92c6;
  border-radius: 2px;
  background: #c0d6f4;
}
.views button {
  width: 18px;
}
.views .on {
  background: #fbd573;
}
.views svg {
  width: 14px;
  height: 12px;
  margin: auto;
}
.pct {
  width: 45px;
}
.round svg {
  width: 16px;
  height: 16px;
}
.zoomer input {
  appearance: none;
  flex: 1;
  min-width: 0;
  height: 16px;
  margin: 0;
  background: linear-gradient(#45639a, #45639a) center / 100% 1px no-repeat;
}
.zoomer input::-webkit-slider-thumb {
  appearance: none;
  width: 9px;
  height: 13px;
  border: 1px solid #4d6187;
  border-radius: 2px 2px 5px 5px;
  background: linear-gradient(90deg, #e5ecf6 3px, #8a9dbd 3px 4px, #e5ecf6 4px);
}

/* Task bar */
.taskbar {
  flex: none;
  display: flex;
  gap: 2px;
  height: 40px;
  border-top: 1px solid #3f556e;
  background: linear-gradient(90deg, #7e93ad, #8298b1 50px, #a5bfdb 90px, #a5bfdb calc(100% - 308px), #8194ab calc(100% - 280px));
}
.start {
  width: 57px;
  padding-left: 8px;
}
.start svg {
  width: 38px;
  height: 38px;
}
.task {
  display: flex;
  align-items: center;
  justify-content: center;
  width: 60px;
  border-radius: 3px;
}
.task svg {
  width: 32px;
  height: 32px;
}
.task.open {
  background: linear-gradient(#dde7f3, #b7cbe3 50%, #adc4df);
  border: 1px solid #37475b;
  box-shadow: inset 0 0 0 1px #e4edf7;
}
.task.stacked {
  position: relative;
  width: 52px;
  margin-right: 8px;
  background: linear-gradient(#f4f8fc, #dbe6f1);
}
.task.stacked::after {
  content: "";
  position: absolute;
  left: 100%;
  top: -1px;
  width: 5px;
  height: 39px;
  border: 1px solid #5c6f88;
  border-left: 0;
  border-radius: 0 3px 3px 0;
  background: #c4d4e7;
}
.skype {
  font: bold 23px "Liberation Sans", sans-serif;
  fill: #fff;
}
.ya {
  font: bold 24px "Liberation Sans", sans-serif;
  fill: #e8170c;
}
.word {
  font-size: 12px;
  font-weight: bold;
  fill: #2a57a6;
}
.tray {
  display: flex;
  align-items: center;
  gap: 8px;
  margin-left: auto;
  color: #fff;
}
.tray svg {
  width: 16px;
  height: 16px;
}
.tray .mini svg {
  width: 10px;
}
.clock {
  width: 72px;
  margin-right: -5px;
  display: flex;
  flex-direction: column;
  align-items: center;
  line-height: 17px;
}
.desktop {
  width: 14px;
  height: 39px;
  border: 1px solid #4c5d73;
  background: linear-gradient(135deg, #a9b9cb, #55657a 60%, #6e8097);
}
```
FILE: script.js
```js
// Column letters and the contents of the worksheet
const letters = 'ABCDEFGHIJKLMNOPQRST'.split('');
const masses = [70, 64, 135, 76, 83, 12, 75, 60, 145, 85, 11, 112, 68, 56, 42, 109,
  94, 67, 98, 75, 150, 86, 49, 35, 120, 83, 90];
const bins = [
  ['9', 1, 2], ['30', 2, 6], ['51', 7, 20], ['72', 11, 42],
  ['93', 14, 70], ['114', 6, 82], ['135', 4, 90], ['Еще', 5, 100]
];

// Cells that need more than a plain right-aligned number
const cells = {
  A1: { text: 'Группировка данных', cls: 'c', span: 3 },
  B2: { text: 'Масса клубня, г.', cls: 'l', span: 2 },
  D3: { cls: 'line' },
  E3: { cls: 'line' },
  F3: { cls: 'line' },
  D4: { text: 'Карман', cls: 'c i' },
  E4: { text: 'Частота', cls: 'c i' },
  F4: { text: '<div>Интегральный %</div>', cls: 'i spill' }
};

masses.forEach((m, i) => { cells['B' + (i + 3)] = { text: m, cls: '' }; });
bins.forEach(([bin, count, pct], i) => {
  const row = i + 5;
  const line = row === 12 ? ' line' : '';
  cells['D' + row] = { text: bin, cls: (isNaN(bin) ? 'l' : '') + line };
  cells['E' + row] = { text: count, cls: line };
  cells['F' + row] = { text: pct + ',00%', cls: line };
});

// Build the grid
document.getElementById('cols').innerHTML = '<col class="col-head">' +
  letters.map(l => `<col class="${l === 'F' ? 'col-wide' : 'col'}">`).join('') + '<col>';
document.getElementById('head').innerHTML = '<th class="corner"></th>' +
  letters.map(l => `<th scope="col">${l}</th>`).join('') + '<th></th>';

let html = '';
for (let r = 1; r <= 29; r++) {
  html += `<tr${r === 3 || r === 12 ? ' class="tall"' : ''}><th scope="row">${r}</th>`;
  for (let c = 0; c <= letters.length; c++) {
    const cell = cells[letters[c] + r];
    if (!cell) {
      html += '<td></td>';
      continue;
    }
    html += `<td class="${cell.cls}" colspan="${cell.span || 1}">${cell.text || ''}</td>`;
    c += (cell.span || 1) - 1;
  }
  html += '</tr>';
}
document.getElementById('rows').innerHTML = html;

// Draw the chart
const left = 62, right = 254, top0 = 57, bottom = 269;
const step = (right - left) / bins.length;
const height = bottom - top0;
let out = '<text class="chart-title mid" x="231" y="34">Гистограмма</text>';

for (let v = 0; v <= 16; v += 2) {
  const y = Math.round(bottom - v / 16 * height);
  out += `<path class="axis" d="M${left - 4} ${y + 0.5}h4"/>`;
  out += `<text class="end" x="50" y="${y + 4}">${v}</text>`;
}
for (let v = 0; v <= 120; v += 20) {
  const y = Math.round(bottom - v / 120 * height);
  out += `<path class="axis" d="M${right} ${y + 0.5}h4"/>`;
  out += `<text x="266" y="${y + 4}">${v},00%</text>`;
}
const points = [];
bins.forEach(([bin, count, pct], i) => {
  const x = left + step * i + step / 2;
  const h = count / 16 * height;
  out += `<rect class="bar" x="${x - 4}" y="${bottom - h}" width="9" height="${h}"/>`;
  out += `<path class="axis" d="M${left + step * i + 0.5} ${bottom}v4"/>`;
  out += `<text class="mid" x="${x}" y="${bottom + 22}">${bin}</text>`;
  points.push([x + 1, bottom - pct / 120 * height]);
});
out += `<path class="axis" d="M${left + 0.5} ${top0}V${bottom + 0.5}H${right + 0.5}V${top0}M${right + 0.5} ${bottom}v4"/>`;
out += `<polyline class="series" points="${points.join(' ')}"/>`;
points.forEach(([x, y]) => {
  out += `<rect class="marker" x="${x - 5}" y="${y - 5}" width="10" height="10"/>`;
});

// Axis titles and legend
out += `<text class="axis-title mid" x="157" y="311">Карман</text>
  <text class="axis-title mid" transform="translate(30 164) rotate(-90)">Частота</text>
  <rect class="bar" x="328" y="171" width="26" height="8"/>
  <text x="356" y="179">Частота</text>
  <path class="series" d="M326 199h28"/>
  <rect class="marker" x="336" y="194" width="9" height="9"/>
  <text x="356" y="203">Интегральный %</text>`;
document.getElementById('chart').innerHTML = out;
```
